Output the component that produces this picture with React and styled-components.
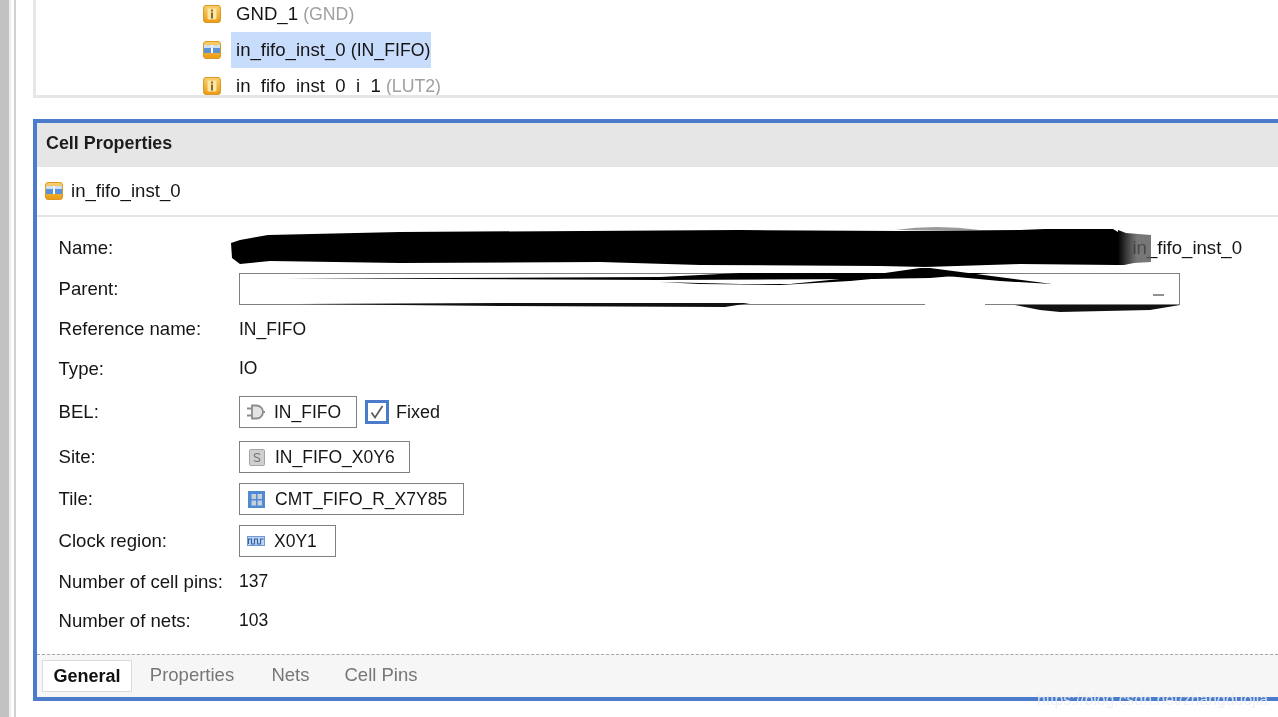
import React from 'react'
import styled, { createGlobalStyle } from 'styled-components'

const GlobalStyle = createGlobalStyle`
  html, body {
    margin: 0;
    padding: 0;
    background: #fff;
  }
  body {
    font-family: "Liberation Sans", Arial, sans-serif;
    font-size: 17.5px;
    color: #151515;
  }
`

const Page = styled.div`
  position: relative;
  display: flex;
  width: 1278px;
  height: 717px;
  overflow: hidden;
  background: #fff;
  filter: blur(0.35px);
`

const Rail = styled.div`
  flex: none;
  width: 9px;
  background: #c2c2c2;
`

const Gutter = styled.div`
  flex: none;
  width: 7px;
  box-sizing: border-box;
  background: linear-gradient(to right, #eeeeee 0 2px, #fff 2px);
  border-right: 2px solid #d2d2d2;
`

const Main = styled.div`
  flex: 1;
  min-width: 0;
  padding-left: 17px;
  display: flex;
  flex-direction: column;
`

const TreePanel = styled.div`
  height: 98px;
  box-sizing: border-box;
  border-left: 3px solid #e6e6e6;
  border-bottom: 3px solid #e6e6e6;
  overflow: hidden;
`

const TreeList = styled.div`
  margin-top: -4px;
  padding-left: 167px;
`

const TreeRow = styled.div`
  display: flex;
  align-items: center;
  height: 36px;
`

const TreeLabel = styled.div`
  margin-left: 10px;
  padding: 0 1px 0 5px;
  height: 36px;
  line-height: 36px;
  white-space: nowrap;
  font-size: 18.6px;
  background: ${(p) => (p.$selected ? '#c8dcfc' : 'transparent')};
`

const Kind = styled.span`
  font-size: 17.7px;
  color: ${(p) => (p.$selected ? '#151515' : '#a0a0a0')};
`

const PropsPanel = styled.div`
  margin-top: 21px;
  height: 582px;
  box-sizing: border-box;
  border: 4px solid #4a7ccb;
  border-right: none;
  display: flex;
  flex-direction: column;
`

const TitleBar = styled.div`
  flex: none;
  height: 44px;
  line-height: 41px;
  padding-left: 9px;
  background: #e6e6e6;
  font-size: 17.9px;
  font-weight: bold;
  color: #1c1c1c;
`

const SubBar = styled.div`
  flex: none;
  height: 50px;
  box-sizing: border-box;
  padding-left: 8px;
  display: flex;
  align-items: center;
  gap: 8px;
  font-size: 18.6px;
  border-bottom: 2px solid #e6e6e6;
`

const Fields = styled.div`
  flex: 1;
  padding: 11px 0 0 21.5px;
`

const FieldRow = styled.div`
  display: flex;
  align-items: center;
  height: ${(p) => p.$h}px;
`

const FieldLabel = styled.div`
  flex: none;
  width: 180.5px;
  white-space: nowrap;
  font-size: 18.6px;
`

const FieldValue = styled.div`
  white-space: nowrap;
`

const NameValue = styled.div`
  width: 1003px;
  display: flex;
  justify-content: space-between;
  font-size: 18.6px;
`

const ValueBox = styled.div`
  box-sizing: border-box;
  height: 32px;
  width: ${(p) => p.$w}px;
  padding-left: ${(p) => p.$pad ?? 7}px;
  display: flex;
  align-items: center;
  gap: ${(p) => p.$gap ?? 9}px;
  border: 1.5px solid #808080;
  white-space: nowrap;
`

const CheckBox = styled.div`
  box-sizing: border-box;
  width: 24px;
  height: 24px;
  margin-left: 8px;
  border: 3px solid #4a7ccb;
  display: flex;
  align-items: center;
  justify-content: center;
`

const CheckLabel = styled.span`
  margin-left: 7px;
  font-size: 18px;
`

const TabBar = styled.div`
  flex: none;
  height: 43px;
  box-sizing: border-box;
  border-top: 1px dashed #a8a8a8;
  background: #f6f6f6;
  padding: 5px 0 0 5px;
  display: flex;
  align-items: flex-start;
`

const Tab = styled.div`
  box-sizing: border-box;
  height: 32px;
  line-height: 30px;
  width: ${(p) => p.$w}px;
  text-align: center;
  font-size: ${(p) => (p.$active ? '18px' : '18.5px')};
  color: ${(p) => (p.$active ? '#111' : '#777')};
  font-weight: ${(p) => (p.$active ? 'bold' : 'normal')};
  background: ${(p) => (p.$active ? '#fff' : 'transparent')};
  border: ${(p) => (p.$active ? '1.5px solid #dcdcdc' : 'none')};
`

const Scribble = styled.svg`
  position: absolute;
  left: 0;
  top: 0;
  pointer-events: none;
`

const Watermark = styled.div`
  position: absolute;
  left: 1037px;
  top: 691px;
  font-size: 15.8px;
  line-height: 18px;
  white-space: nowrap;
  color: rgba(235, 238, 245, 0.85);
`

const InstIcon = ({ band }) => (
  <svg width="18" height="18" viewBox="0 0 18 18" style={{ flex: 'none' }}>
    <defs>
      <linearGradient id={band ? 'instB' : 'instA'} x1="0" y1="0" x2="0" y2="1">
        <stop offset="0" stopColor="#f8d070" />
        <stop offset="1" stopColor="#eb9a10" />
      </linearGradient>
    </defs>
    <rect x="0.5" y="0.5" width="17" height="17" rx="2.5" fill={`url(#${band ? 'instB' : 'instA'})`} stroke="#d99a2a" />
    {band ? (
      <>
        <rect x="1" y="4" width="16" height="8" fill="#5b93d8" />
        <rect x="1" y="4" width="16" height="3" fill="#cfe0f4" />
        <rect x="8" y="4.5" width="2" height="1.5" fill="#fff" />
        <rect x="8" y="7" width="2" height="5" fill="#fff" />
      </>
    ) : (
      <>
        <rect x="4.5" y="3.5" width="9" height="11" fill="#fbe6a8" />
        <rect x="8" y="4.5" width="2" height="2" fill="#8a6a20" />
        <rect x="8" y="7.5" width="2" height="6" fill="#8a6a20" />
      </>
    )}
  </svg>
)

const GateIcon = () => (
  <svg width="18" height="16" viewBox="0 0 18 16" style={{ flex: 'none' }}>
    <path d="M5 1.5h4.5a6.5 6.5 0 0 1 0 13H5z" fill="#e4e4e4" stroke="#8c8c8c" strokeWidth="1.8" />
    <path d="M0 4.5h5M0 11.5h5M15 8h3" stroke="#8c8c8c" strokeWidth="1.8" fill="none" />
  </svg>
)

const SiteIcon = () => (
  <svg width="16" height="17" viewBox="0 0 16 17" style={{ flex: 'none' }}>
    <rect x="0.5" y="0.5" width="15" height="16" rx="1" fill="#cfcfcf" stroke="#a4a4a4" />
    <path d="M11 5.7C10.4 4.8 9.3 4.5 8 4.5 6.4 4.5 5.2 5.2 5.2 6.5c0 2.7 5.7 1.4 5.7 4 0 1.3-1.3 2-2.9 2-1.4 0-2.5-.4-3.1-1.3" fill="none" stroke="#777" strokeWidth="1.1" />
  </svg>
)

const TileIcon = () => (
  <svg width="17" height="17" viewBox="0 0 17 17" style={{ flex: 'none' }}>
    <rect width="17" height="17" fill="#4f8ad4" />
    <rect x="3.5" y="3" width="4.5" height="5" fill="#c8cfd8" />
    <rect x="9.5" y="3" width="4.5" height="5" fill="#c8cfd8" />
    <rect x="3.5" y="9.5" width="4.5" height="5" fill="#c8cfd8" />
    <rect x="9.5" y="9.5" width="4.5" height="5" fill="#c8cfd8" />
  </svg>
)

const ClockIcon = () => (
  <svg width="18" height="10" viewBox="0 0 18 10" style={{ flex: 'none' }}>
    <rect x="0.5" y="0.5" width="17" height="9" fill="#bcd2f0" stroke="#6f9bdc" />
    <path d="M1.5 8V3h3v5h3V3h3v5h3V3h3" fill="none" stroke="#33619f" strokeWidth="1.1" />
  </svg>
)

const rows = [
  { label: 'GND_1', kind: '(GND)' },
  { label: 'in_fifo_inst_0', kind: '(IN_FIFO)', selected: true },
  { label: 'in_fifo_inst_0_i_1', kind: '(LUT2)' },
]

export default function App() {
  return (
    <Page>
      <GlobalStyle />
      <Rail />
      <Gutter />
      <Main>
        <TreePanel>
          <TreeList>
            {rows.map((r) => (
              <TreeRow key={r.label}>
                <InstIcon band={r.selected} />
                <TreeLabel $selected={r.selected}>
                  {r.label} <Kind $selected={r.selected}>{r.kind}</Kind>
                </TreeLabel>
              </TreeRow>
            ))}
          </TreeList>
        </TreePanel>
        <PropsPanel>
          <TitleBar>Cell Properties</TitleBar>
          <SubBar>
            <InstIcon band />
            in_fifo_inst_0
          </SubBar>
          <Fields>
            <FieldRow $h={40}>
              <FieldLabel>Name:</FieldLabel>
              <NameValue>
                <span>i</span>
                <span>in_fifo_inst_0</span>
              </NameValue>
            </FieldRow>
            <FieldRow $h={41}>
              <FieldLabel>Parent:</FieldLabel>
              <ValueBox $w={941} />
            </FieldRow>
            <FieldRow $h={40}>
              <FieldLabel>Reference name:</FieldLabel>
              <FieldValue>IN_FIFO</FieldValue>
            </FieldRow>
            <FieldRow $h={39}>
              <FieldLabel>Type:</FieldLabel>
              <FieldValue>IO</FieldValue>
            </FieldRow>
            <FieldRow $h={48}>
              <FieldLabel>BEL:</FieldLabel>
              <ValueBox $w={118}>
                <GateIcon />
                IN_FIFO
              </ValueBox>
              <CheckBox>
                <svg width="16" height="16" viewBox="0 0 16 16">
                  <path d="M2.5 8.5l3.5 5L13.5 2" fill="none" stroke="#555" strokeWidth="1.6" />
                </svg>
              </CheckBox>
              <CheckLabel>Fixed</CheckLabel>
            </FieldRow>
            <FieldRow $h={42}>
              <FieldLabel>Site:</FieldLabel>
              <ValueBox $w={171} $pad={9} $gap={10}>
                <SiteIcon />
                IN_FIFO_X0Y6
              </ValueBox>
            </FieldRow>
            <FieldRow $h={42}>
              <FieldLabel>Tile:</FieldLabel>
              <ValueBox $w={225} $pad={8} $gap={10}>
                <TileIcon />
                CMT_FIFO_R_X7Y85
              </ValueBox>
            </FieldRow>
            <FieldRow $h={42}>
              <FieldLabel>Clock region:</FieldLabel>
              <ValueBox $w={97}>
                <ClockIcon />
                X0Y1
              </ValueBox>
            </FieldRow>
            <FieldRow $h={39}>
              <FieldLabel>Number of cell pins:</FieldLabel>
              <FieldValue>137</FieldValue>
            </FieldRow>
            <FieldRow $h={39}>
              <FieldLabel>Number of nets:</FieldLabel>
              <FieldValue>103</FieldValue>
            </FieldRow>
          </Fields>
          <TabBar>
            <Tab $active $w={90}>General</Tab>
            <Tab $w={120}>Properties</Tab>
            <Tab $w={77}>Nets</Tab>
            <Tab $w={104}>Cell Pins</Tab>
          </TabBar>
        </PropsPanel>
      </Main>

      {/* marker strokes someone painted over the paths */}
      <Scribble width="1278" height="717" viewBox="0 0 1278 717">
        <defs>
          <linearGradient id="smudge" x1="1118" y1="0" x2="1137" y2="0" gradientUnits="userSpaceOnUse">
            <stop offset="0" stopColor="#000" />
            <stop offset="1" stopColor="#555" stopOpacity="0.8" />
          </linearGradient>
        </defs>
        <path d="M895 230Q935 224 980 230Z" fill="#9a9a9a" />
        <path d="M231 243L240 240L268 235L400 232L740 230L900 231L1020 230L1045 229L1113 229L1118 232V265L1020 264L925 267L880 266L700 265L600 262L400 263L270 261L240 264L232 258Z" fill="#000" />
        <path d="M1118 230L1126 233L1151 235V262L1134 263L1124 265H1118Z" fill="url(#smudge)" />
        <path d="M245 279H1176V303H245Z" fill="#fff" />
        <path d="M925 303H985V308H925Z" fill="#fff" />
        <path d="M245 276H250L246 282V296L252 303H245Z" fill="#fff" />
        <path d="M285 279H445L660 280L870 279L930 278L990 273L740 273L660 277L445 278Z" fill="#000" />
        <path d="M660 282L740 284L790 284L850 278L920 268L930 268L1052 284L1000 281L925 274L850 281L780 285L700 284Z" fill="#000" />
        <path d="M298 304L500 303L750 303L725 307L500 306Z" fill="#111" />
        <path d="M1015 305L1180 305L1150 310L1060 312L1040 310Z" fill="#111" />
        <path d="M1153 295H1164" stroke="#222" strokeWidth="1" />
      </Scribble>
      <Watermark>https://blog.csdn.net/zhangduojia</Watermark>
    </Page>
  )
}
